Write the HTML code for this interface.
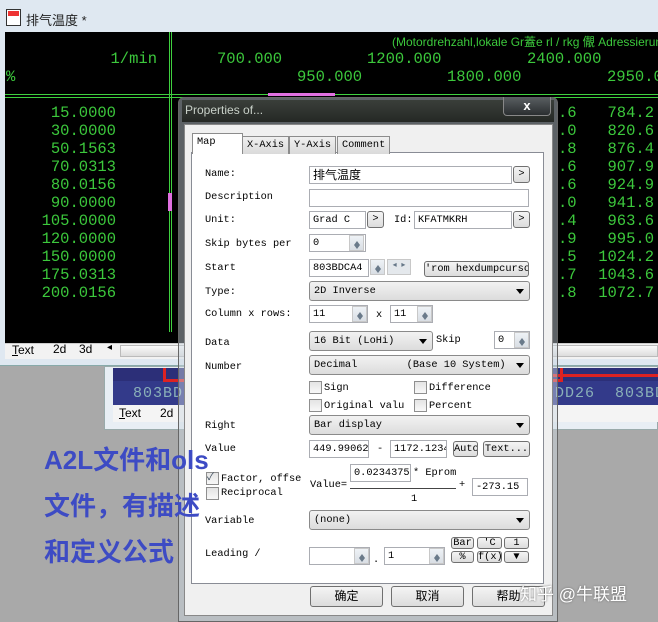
<!DOCTYPE html>
<html><head><meta charset="utf-8"><style>
*{margin:0;padding:0;box-sizing:border-box}
body{width:658px;height:622px;overflow:hidden;background:#a9a9a9;position:relative;font-family:"Liberation Mono","Noto Sans CJK SC",monospace}
.a{position:absolute}
.g{color:#3cc83c;font-family:"Liberation Mono",monospace;font-size:15.5px;white-space:nowrap}
.r{text-align:right}
.lab{position:absolute;font-family:"Liberation Mono","Noto Sans CJK SC",monospace;font-size:10.3px;color:#000;white-space:nowrap}
.in{position:absolute;background:#fff;border:1px solid #abadb3;font-size:10.3px;font-family:"Liberation Mono","Noto Sans CJK SC",monospace;padding:1px 3px;white-space:nowrap;overflow:hidden;height:18px;line-height:14px}
.sel{position:absolute;border:1px solid #8a8a8a;border-radius:3px;background:linear-gradient(#f2f2f2,#dcdcdc);font-size:10.3px;padding:1px 4px;height:20px;line-height:16px;white-space:nowrap}
.sel:after{content:"";position:absolute;right:5px;top:7px;border:4px solid transparent;border-top:5px solid #000}
.btn{position:absolute;border:1px solid #707070;border-radius:3px;background:linear-gradient(#f4f4f4,#dcdcdc);font-size:10.3px;text-align:center;line-height:15px;white-space:nowrap;overflow:hidden}
.sp{position:absolute;width:15px;height:16px;border:1px solid #c8c8c8;background:linear-gradient(#eef2f6,#d9dee4)}
.sp:before{content:"";position:absolute;left:4px;top:2px;border:3px solid transparent;border-bottom:4px solid #6a7a8a}
.sp:after{content:"";position:absolute;left:4px;top:9px;border:3px solid transparent;border-top:4px solid #6a7a8a}
.cb{position:absolute;width:13px;height:13px;border:1px solid #8f8f8f;background:linear-gradient(#e4e4e4,#f8f8f8)}
.tab{position:absolute;font-size:10.3px;border:1px solid #8c8c8c;border-bottom:none;background:linear-gradient(#f0f0f0,#dadada);padding:2px 4px;height:18px}
.cn{font-family:"Liberation Sans","Noto Sans CJK SC",sans-serif}
</style></head><body>
<div class="a" style="left:0;top:0;width:658px;height:366px;background:#dfe8f1;border-bottom:1px solid #8aa"></div>
<div class="a" style="left:6px;top:9px;width:15px;height:17px;background:#fff;border:1px solid #333"><div style="height:5px;background:#e33;margin:1px"></div></div>
<div class="a cn" style="left:26px;top:10px;font-size:13px;color:#222">排气温度 *</div>
<div class="a" style="left:5px;top:32px;width:653px;height:311px;background:#000"></div>
<div class="a" style="left:5px;top:94px;width:653px;height:1px;background:#3fd03f"></div>
<div class="a" style="left:5px;top:97px;width:653px;height:1px;background:#3fd03f"></div>
<div class="a" style="left:169px;top:32px;width:1px;height:300px;background:#3fd03f"></div>
<div class="a" style="left:171px;top:32px;width:1px;height:300px;background:#3fd03f"></div>
<div class="a" style="left:268px;top:93px;width:67px;height:3px;background:#e070e0"></div>
<div class="a" style="left:168px;top:193px;width:4px;height:18px;background:#e070e0"></div>
<div class="a cn" style="left:392px;top:33px;font-size:12px;color:#3cc83c;white-space:nowrap">(Motordrehzahl,lokale Gr蓋e rl / rkg 儬 Adressierung</div>
<div class="a g r" style="left:60px;top:50px;width:97px">1/min</div>
<div class="a g" style="left:6px;top:68px">%</div>
<div class="a g" style="left:217px;top:50px">700.000</div>
<div class="a g" style="left:367px;top:50px">1200.000</div>
<div class="a g" style="left:527px;top:50px">2400.000</div>
<div class="a g" style="left:297px;top:68px">950.000</div>
<div class="a g" style="left:447px;top:68px">1800.000</div>
<div class="a g" style="left:607px;top:68px">2950.000</div>
<div class="a g r" style="left:10px;top:104px;width:106px;line-height:18px">15.0000<br>30.0000<br>50.1563<br>70.0313<br>80.0156<br>90.0000<br>105.0000<br>120.0000<br>150.0000<br>175.0313<br>200.0156</div>
<div class="a g" style="left:558px;top:104px;line-height:18px">.6<br>.0<br>.8<br>.6<br>.6<br>.0<br>.4<br>.9<br>.5<br>.7<br>.8</div>
<div class="a g r" style="left:580px;top:104px;width:74px;line-height:18px">784.2<br>820.6<br>876.4<br>907.9<br>924.9<br>941.8<br>963.6<br>995.0<br>1024.2<br>1043.6<br>1072.7</div>
<div class="a" style="left:5px;top:343px;width:653px;height:16px;background:#f2f2f2;border-top:1px solid #ccc"></div>
<div class="a cn" style="left:12px;top:343px;font-size:12px"><u>T</u>ext</div>
<div class="a cn" style="left:53px;top:342px;font-size:12px">2d</div>
<div class="a cn" style="left:79px;top:342px;font-size:12px">3d</div>
<div class="a cn" style="left:107px;top:342px;font-size:10px">◂</div>
<div class="a" style="left:120px;top:345px;width:538px;height:12px;background:linear-gradient(#fafafa,#dcdcdc);border:1px solid #bbb"></div>
<div class="a" style="left:104px;top:366px;width:554px;height:64px;background:#e8eef4;border:1px solid #9aa"></div>
<div class="a" style="left:113px;top:368px;width:545px;height:37px;background:#333a8a"></div>
<div class="a" style="left:113px;top:368px;width:545px;height:13px;background:#2c2f78"></div>
<div class="a" style="left:163px;top:368px;width:400px;height:14px;border:3px solid #d22;border-top:none"></div>
<div class="a" style="left:545px;top:374px;width:113px;height:3px;background:#d22"></div>
<div class="a" style="left:133px;top:385px;font-size:15px;color:#8ab0b8;letter-spacing:1px;white-space:nowrap">803BD</div>
<div class="a" style="left:555px;top:385px;font-size:15px;color:#8ab0b8;letter-spacing:1px;white-space:nowrap">DD26 &nbsp;803BD</div>
<div class="a" style="left:113px;top:405px;width:545px;height:17px;background:#f4f4f4"></div>
<div class="a cn" style="left:119px;top:406px;font-size:12px"><u>T</u>ext</div>
<div class="a cn" style="left:160px;top:406px;font-size:12px">2d</div>
<div class="a" style="left:178px;top:97px;width:380px;height:525px;background:rgba(205,215,225,0.45);border:1px solid #666;border-radius:6px 6px 0 0"></div>
<div class="a" style="left:182px;top:100px;width:372px;height:22px;background:linear-gradient(#3a3f3a,#252825)"></div>
<div class="a cn" style="left:185px;top:103px;font-size:12px;color:#c8d0c8">Properties of...</div>
<div class="a" style="left:503px;top:97px;width:48px;height:19px;border:1px solid #888;border-top:none;border-radius:0 0 4px 4px;background:linear-gradient(#5a5f62,#2a2e30);color:#fff;font:bold 13px 'Liberation Sans';text-align:center;line-height:17px">x</div>
<div class="a" style="left:184px;top:124px;width:369px;height:492px;background:#f0f0f0;border:1px solid #888"></div>
<div class="a" style="left:191px;top:152px;width:353px;height:432px;background:#fff;border:1px solid #898c95"></div>
<div class="tab" style="left:242px;top:136px">X-Axis</div>
<div class="tab" style="left:289px;top:136px">Y-Axis</div>
<div class="tab" style="left:337px;top:136px">Comment</div>
<div class="tab" style="left:192px;top:133px;width:51px;height:21px;background:#fff;border-bottom:none">Map</div>
<div class="lab" style="left:205px;top:168px">Name:</div>
<div class="in cn" style="left:309px;top:166px;width:203px;font-size:12px">排气温度</div>
<div class="btn" style="left:513px;top:166px;width:17px;height:17px">&gt;</div>
<div class="lab" style="left:205px;top:191px">Description</div>
<div class="in" style="left:309px;top:189px;width:220px"></div>
<div class="lab" style="left:205px;top:214px">Unit:</div>
<div class="in" style="left:309px;top:211px;width:57px">Grad C</div>
<div class="btn" style="left:367px;top:211px;width:17px;height:17px">&gt;</div>
<div class="lab" style="left:394px;top:214px">Id:</div>
<div class="in" style="left:414px;top:211px;width:98px">KFATMKRH</div>
<div class="btn" style="left:513px;top:211px;width:17px;height:17px">&gt;</div>
<div class="lab" style="left:205px;top:238px">Skip bytes per</div>
<div class="in" style="left:309px;top:234px;width:57px">0</div><div class="sp" style="left:349px;top:235px"></div>
<div class="lab" style="left:205px;top:262px">Start</div>
<div class="in" style="left:309px;top:259px;width:60px">803BDCA4</div><div class="sp" style="left:370px;top:259px"></div>
<div class="a" style="left:387px;top:259px;width:24px;height:16px;border:1px solid #c8c8c8;background:#e4e8ec;font-size:8px;text-align:center;color:#678">◂ ▸</div>
<div class="btn" style="left:424px;top:261px;width:105px;height:16px">'rom hexdumpcursor</div>
<div class="lab" style="left:205px;top:286px">Type:</div>
<div class="sel" style="left:309px;top:281px;width:221px">2D Inverse</div>
<div class="lab" style="left:205px;top:308px">Column x rows:</div>
<div class="in" style="left:309px;top:305px;width:59px">11</div><div class="sp" style="left:352px;top:306px"></div>
<div class="lab" style="left:376px;top:309px">x</div>
<div class="in" style="left:390px;top:305px;width:43px">11</div><div class="sp" style="left:417px;top:306px"></div>
<div class="lab" style="left:205px;top:337px">Data</div>
<div class="sel" style="left:309px;top:331px;width:124px">16 Bit (LoHi)</div>
<div class="lab" style="left:436px;top:334px">Skip</div>
<div class="in" style="left:494px;top:331px;width:36px">0</div><div class="sp" style="left:514px;top:332px"></div>
<div class="lab" style="left:205px;top:361px">Number</div>
<div class="sel" style="left:309px;top:355px;width:221px">Decimal&nbsp;&nbsp;&nbsp;&nbsp;&nbsp;&nbsp;&nbsp;&nbsp;(Base 10 System)</div>
<div class="cb" style="left:309px;top:381px"></div><div class="lab" style="left:324px;top:382px">Sign</div>
<div class="cb" style="left:414px;top:381px"></div><div class="lab" style="left:429px;top:382px">Difference</div>
<div class="cb" style="left:309px;top:399px"></div><div class="lab" style="left:324px;top:400px">Original valu</div>
<div class="cb" style="left:414px;top:399px"></div><div class="lab" style="left:429px;top:400px">Percent</div>
<div class="lab" style="left:205px;top:420px">Right</div>
<div class="sel" style="left:309px;top:415px;width:221px">Bar display</div>
<div class="lab" style="left:205px;top:443px">Value</div>
<div class="in" style="left:309px;top:440px;width:60px">449.99062</div>
<div class="lab" style="left:377px;top:443px">-</div>
<div class="in" style="left:390px;top:440px;width:57px">1172.1234</div>
<div class="btn" style="left:453px;top:441px;width:25px;height:16px">Auto</div>
<div class="btn" style="left:483px;top:441px;width:47px;height:16px">Text...</div>
<div class="cb" style="left:206px;top:472px;font-size:10px;line-height:11px;color:#345">✓</div><div class="lab" style="left:221px;top:473px">Factor, offse</div>
<div class="cb" style="left:206px;top:487px"></div><div class="lab" style="left:221px;top:487px">Reciprocal</div>
<div class="lab" style="left:310px;top:479px">Value=</div>
<div class="in" style="left:350px;top:464px;width:61px">0.0234375</div>
<div class="lab" style="left:413px;top:467px">* Eprom</div>
<div class="a" style="left:350px;top:488px;width:106px;height:1px;background:#444"></div>
<div class="lab" style="left:459px;top:479px">+</div>
<div class="in" style="left:472px;top:478px;width:56px">-273.15</div>
<div class="lab" style="left:411px;top:493px">1</div>
<div class="lab" style="left:205px;top:515px">Variable</div>
<div class="sel" style="left:309px;top:510px;width:221px">(none)</div>
<div class="lab" style="left:205px;top:548px">Leading /</div>
<div class="in" style="left:309px;top:547px;width:61px"></div><div class="sp" style="left:354px;top:548px"></div>
<div class="lab" style="left:373px;top:554px">.</div>
<div class="in" style="left:384px;top:547px;width:61px">1</div><div class="sp" style="left:429px;top:548px"></div>
<div class="btn" style="left:451px;top:537px;width:23px;height:12px;line-height:10px">Bar</div>
<div class="btn" style="left:477px;top:537px;width:25px;height:12px;line-height:10px">'C</div>
<div class="btn" style="left:504px;top:537px;width:25px;height:12px;line-height:10px">1</div>
<div class="btn" style="left:451px;top:551px;width:23px;height:12px;line-height:10px">%</div>
<div class="btn" style="left:477px;top:551px;width:25px;height:12px;line-height:10px">f(x)</div>
<div class="btn" style="left:504px;top:551px;width:25px;height:12px;line-height:10px">▼</div>
<div class="btn cn" style="left:310px;top:586px;width:73px;height:21px;line-height:19px;font-size:12px">确定</div>
<div class="btn cn" style="left:391px;top:586px;width:73px;height:21px;line-height:19px;font-size:12px">取消</div>
<div class="btn cn" style="left:472px;top:586px;width:73px;height:21px;line-height:19px;font-size:12px">帮助</div>
<div class="a cn" style="left:44px;top:437px;font-size:26px;font-weight:bold;color:#3d4bc4;line-height:46px;white-space:nowrap">A2L文件和ols<br>文件，有描述<br>和定义公式</div>
<div class="a cn" style="left:520px;top:580px;font-size:17px;color:#fff;text-shadow:0 0 2px #666;white-space:nowrap">知乎 @牛联盟</div>
</body></html>
